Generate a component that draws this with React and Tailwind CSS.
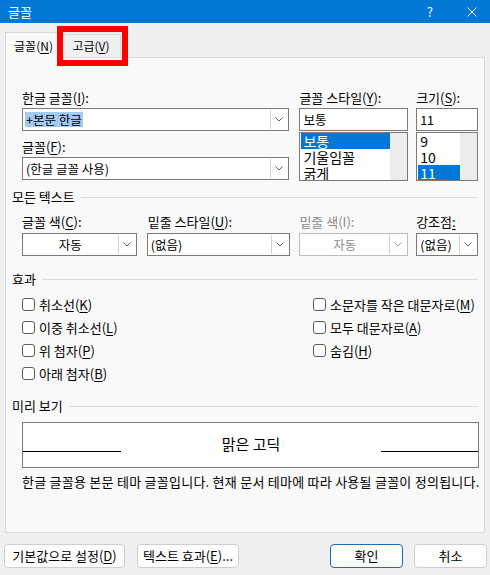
import React from 'react'

const FONT = "font-['Noto_Sans_CJK_KR','Noto_Sans',sans-serif]"

// underlined access key, as in Windows dialogs
function K({ children }) {
  return <span className="underline underline-offset-[2px] decoration-[1px]">{children}</span>
}

function Chevron({ color = '#5f5f5f' }) {
  return (
    <svg width="8" height="5" viewBox="0 0 8 5" className="block">
      <path d="M0.5 0.5 L4 4 L7.5 0.5" fill="none" stroke={color} strokeWidth="1" />
    </svg>
  )
}

function Combo({ className = '', children, disabled, center }) {
  return (
    <div
      className={`h-[23px] flex bg-white border text-[12.5px] ${disabled ? 'border-[#bcbcbc]' : 'border-[#7a7a7a]'} ${className}`}
    >
      <div
        className={`flex-1 flex items-center overflow-hidden whitespace-nowrap ${center ? 'justify-center' : 'pl-[3px]'} ${disabled ? 'text-[#8a8a8a]' : 'text-black'}`}
      >
        {children}
      </div>
      <div className="w-[17px] my-px mr-px flex items-center justify-center border-l border-[#d2d2d2]">
        <Chevron color={disabled ? '#9a9a9a' : '#5f5f5f'} />
      </div>
    </div>
  )
}

function ListBox({ className = '', items, selected, textInput }) {
  return (
    <div className={className}>
      <div className="h-[23px] flex items-center pl-[3px] bg-white border border-[#7a7a7a] text-[12.5px]">
        {textInput}
      </div>
      <div className="mt-px h-[49px] flex bg-white border border-[#7a7a7a] overflow-hidden text-[14px]">
        <div className="flex-1 pl-px">
          {items.map((it) => (
            <div
              key={it}
              className={`h-[16px] leading-[16px] pl-[2px] ${it === selected ? 'bg-[#0078d7] text-white' : ''}`}
            >
              {it}
            </div>
          ))}
        </div>
        <div className="w-[17px] bg-[#ececec]" />
      </div>
    </div>
  )
}

function SectionHeader({ children }) {
  return (
    <div className="flex items-center h-[16px] leading-[16px]">
      <span className="pr-[6px]">{children}</span>
      <div className="flex-1 h-px bg-[#dcdcdc]" />
    </div>
  )
}

function Check({ children }) {
  return (
    <div className="h-[23px] flex items-center">
      <div className="w-[13px] h-[13px] rounded-[3px] border border-[#5c5c5c] bg-white" />
      <span className="ml-[4px] leading-[16px]">{children}</span>
    </div>
  )
}

function Button({ className = '', primary, children }) {
  return (
    <div
      className={`h-[24px] flex items-center justify-center rounded-[4px] bg-[#fdfdfd] border ${primary ? 'border-[#1c6cb4]' : 'border-[#cfcfcf]'} ${className}`}
    >
      {children}
    </div>
  )
}

export default function App() {
  return (
    <div className={`${FONT} relative w-[490px] h-[575px] bg-[#f0f0f0] text-[13px] text-black overflow-hidden`}>
      {/* title bar */}
      <div className="h-[23px] bg-[#0078d4] flex items-center text-white">
        <span className="pl-[8px] text-[13px] leading-[16px]">글꼴</span>
        <span className="ml-auto mr-[34px] text-[13px] leading-[16px]">?</span>
        <svg width="10" height="10" viewBox="0 0 10 10" className="mr-[13px]">
          <path d="M0.5 0.5 L9.5 9.5 M9.5 0.5 L0.5 9.5" stroke="#fff" strokeWidth="1" />
        </svg>
      </div>

      {/* tabs */}
      <div className="h-[34px] flex items-end pl-[5px] text-[12px]">
        <div className="relative z-10 -mb-px h-[26px] w-[57px] flex items-center justify-center bg-[#f9f9f9] border-l border-t border-r border-[#d9d9d9] leading-[16px]">
          <span>
            글꼴(<K>N</K>)
          </span>
        </div>
        <div className="h-[23px] w-[59px] flex items-center justify-center bg-[#f0f0f0] border-t border-r border-[#d9d9d9] leading-[16px]">
          <span>
            고급(<K>V</K>)
          </span>
        </div>
      </div>

      {/* red highlight on the advanced tab */}
      <div className="absolute left-[57px] top-[26px] w-[71px] h-[40px] border-[6px] border-[#ff0000] z-20" />

      {/* panel */}
      <div className="ml-[5px] w-[480px] h-[476px] bg-[#f9f9f9] border border-[#dadada] pl-[6px] pr-[6px] pt-[32px]">
        {/* font selection */}
        <div className="flex pl-[10px] leading-[16px]">
          <div className="w-[268px]">
            <div className="h-[16px]">
              한글 글꼴(<K>I</K>):
            </div>
            <div className="mt-[2px] h-[23px] flex bg-white border border-[#7a7a7a] text-[12.5px]">
              <div className="flex-1 flex items-center pl-[2px]">
                <span className="bg-[#a3cbef] px-px leading-[15px]">+본문 한글</span>
              </div>
              <div className="w-[17px] my-px mr-px flex items-center justify-center border-l border-[#d2d2d2]">
                <Chevron />
              </div>
            </div>
            <div className="mt-[8px] h-[16px]">
              글꼴(<K>F</K>):
            </div>
            <Combo className="mt-[2px]">(한글 글꼴 사용)</Combo>
          </div>
          <div className="ml-[10px] w-[109px]">
            <div className="h-[16px] mb-[2px] whitespace-nowrap">
              글꼴 스타일(<K>Y</K>):
            </div>
            <ListBox items={['보통', '기울임꼴', '굵게']} selected="보통" textInput="보통" />
          </div>
          <div className="ml-[8px] w-[62px]">
            <div className="h-[16px] mb-[2px]">
              크기(<K>S</K>):
            </div>
            <ListBox items={['9', '10', '11']} selected="11" textInput="11" />
          </div>
        </div>

        {/* all text */}
        <div className="mt-[8px]">
          <SectionHeader>모든 텍스트</SectionHeader>
        </div>
        <div className="mt-[9px] flex pl-[10px] leading-[16px]">
          <div className="w-[115px]">
            <div className="h-[16px]">
              글꼴 색(<K>C</K>):
            </div>
            <Combo className="mt-[3px]" center>
              자동
            </Combo>
          </div>
          <div className="ml-[10px] w-[144px]">
            <div className="h-[16px] pl-px">
              밑줄 스타일(<K>U</K>):
            </div>
            <Combo className="mt-[3px]">(없음)</Combo>
          </div>
          <div className="ml-[9px] w-[109px]">
            <div className="h-[16px] text-[#8a8a8a]">밑줄 색(I):</div>
            <Combo className="mt-[3px]" center disabled>
              자동
            </Combo>
          </div>
          <div className="ml-[8px] w-[62px]">
            <div className="h-[16px]">
              강조점<K>:</K>
            </div>
            <Combo className="mt-[3px]">(없음)</Combo>
          </div>
        </div>

        {/* effects */}
        <div className="mt-[15px]">
          <SectionHeader>효과</SectionHeader>
        </div>
        <div className="mt-[6px] flex pl-[10px]">
          <div className="w-[291px]">
            <Check>
              취소선(<K>K</K>)
            </Check>
            <Check>
              이중 취소선(<K>L</K>)
            </Check>
            <Check>
              위 첨자(<K>P</K>)
            </Check>
            <Check>
              아래 첨자(<K>B</K>)
            </Check>
          </div>
          <div>
            <Check>
              소문자를 작은 대문자로(<K>M</K>)
            </Check>
            <Check>
              모두 대문자로(<K>A</K>)
            </Check>
            <Check>
              숨김(<K>H</K>)
            </Check>
          </div>
        </div>

        {/* preview */}
        <div className="mt-[13px]">
          <SectionHeader>미리 보기</SectionHeader>
        </div>
        <div className="ml-[10px] mt-[8px] w-[457px] h-[46px] bg-white border border-[#7a7a7a] flex items-start">
          <div className="mt-[28px] w-[98px] h-px bg-black" />
          <div className="flex-1 text-center pt-[11px] text-[15px] leading-[20px]">맑은 고딕</div>
          <div className="mt-[28px] w-[97px] h-px bg-black" />
        </div>
        <div className="ml-[10px] mt-[6px] h-[16px] leading-[16px] whitespace-nowrap tracking-[0.25px]">
          한글 글꼴용 본문 테마 글꼴입니다. 현재 문서 테마에 따라 사용될 글꼴이 정의됩니다.
        </div>
      </div>

      {/* buttons */}
      <div className="mt-[11px] flex items-center leading-[16px]">
        <Button className="ml-[4px] w-[121px]">
          기본값으로 설정(<K>D</K>)
        </Button>
        <Button className="ml-[12px] w-[102px]">
          텍스트 효과(<K>E</K>)...
        </Button>
        <Button className="ml-auto w-[73px]" primary>
          확인
        </Button>
        <Button className="ml-[11px] mr-[3px] w-[73px]">취소</Button>
      </div>
    </div>
  )
}
